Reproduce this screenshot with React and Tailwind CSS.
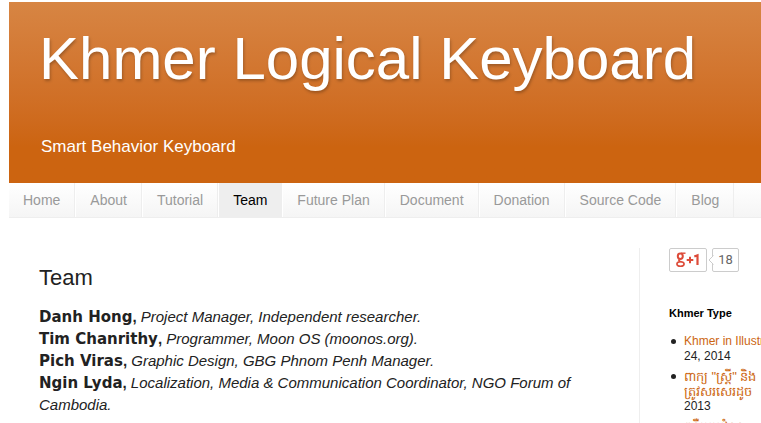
import React from 'react';

const tabs = ['Home', 'About', 'Tutorial', 'Team', 'Future Plan', 'Document', 'Donation', 'Source Code', 'Blog'];

const members = [
  { name: 'Danh Hong', role: 'Project Manager, Independent researcher.' },
  { name: 'Tim Chanrithy', role: 'Programmer, Moon OS (moonos.org).' },
  { name: 'Pich Viras', role: 'Graphic Design, GBG Phnom Penh Manager.' },
  { name: 'Ngin Lyda', role: 'Localization, Media & Communication Coordinator, NGO Forum of Cambodia.' },
];

const posts = [
  { lang: 'en', lines: ['Khmer in Illustrator'], date: '24, 2014' },
  { lang: 'km', lines: ['ពាក្យ "ស្ត្រី" និង', 'ត្រូវសរសេរដូច'], date: '2013' },
  { lang: 'km', lines: ['ពន្លឺរបបជំនួន'], date: '' },
];

function Header() {
  return (
    <header className="h-[181px] bg-linear-to-b from-[#d78543] to-[#cc6410] to-80% px-[30px] pt-[22px] text-white">
      <h1 className="whitespace-nowrap text-[60px] leading-[70px] [text-shadow:1px_2px_3px_rgba(0,0,0,0.25)]">
        Khmer Logical Keyboard
      </h1>
      <p className="mt-[43px] px-[2px] text-[17px] leading-5">Smart Behavior Keyboard</p>
    </header>
  );
}

function TabBar() {
  return (
    <nav className="border-b border-[#eeeeee] bg-linear-to-b from-white to-[#f5f5f5]">
      <ul className="flex">
        {tabs.map((tab) => (
          <li key={tab} className="border-r border-l border-r-[#eeeeee] border-l-white first:border-l-0">
            <a
              href="#"
              className={
                tab === 'Team'
                  ? 'block whitespace-nowrap bg-[#eeeeee] px-[14px] text-sm leading-[34px] text-black'
                  : 'block whitespace-nowrap px-[14px] text-sm leading-[34px] text-[#999999]'
              }
            >
              {tab}
            </a>
          </li>
        ))}
      </ul>
    </nav>
  );
}

function PlusOne() {
  return (
    <div className="flex items-center gap-[5px]">
      <button
        aria-label="+1"
        className="flex h-6 w-[38px] items-center justify-center rounded-[2px] border border-[#cccccc] bg-white"
      >
        <svg width="26" height="16" viewBox="0 0 26 16" fill="none" stroke="#dd4b39">
          <ellipse cx="5.300" cy="4.300" rx="2.500" ry="2.700" strokeWidth="2" />
          <path d="M6 1.200H10.500" strokeWidth="1.400" />
          <path d="M4.500 7.300C3 8.600 4.500 9.300 6.500 9.800" strokeWidth="1.600" />
          <ellipse cx="5.500" cy="12" rx="3.600" ry="2.300" strokeWidth="1.600" />
          <path d="M11.700 8h6.600M15 4.700v6.600" strokeWidth="2" />
          <path d="M19.300 4.500L22.500 3.300V13" strokeWidth="2.200" />
        </svg>
      </button>
      <div className="relative flex h-6 w-[27px] items-center justify-center rounded-[2px] border border-[#cccccc] bg-white font-[Roboto,sans-serif] text-[13px] text-[#666666]">
        <svg className="absolute top-[6px] -left-[5px]" width="6" height="10" viewBox="0 0 6 10">
          <path d="M5.500 0.500L1 5l4.500 4.500" fill="white" stroke="#cccccc" />
        </svg>
        18
      </div>
    </div>
  );
}

function Sidebar() {
  return (
    <aside className="w-[122px] shrink-0 overflow-hidden border-l border-[#eeeeee] pl-[29px]">
      <PlusOne />
      <h2 className="mt-[34px] text-[11px] leading-[14px] font-bold text-black">Khmer Type</h2>
      <ul className="mt-[14px] text-xs leading-[15px]">
        {posts.map((post) => (
          <li key={post.lines[0]} className="flex gap-2 whitespace-nowrap pb-[5px]">
            <span className="mt-[5px] ml-[2px] size-[5px] shrink-0 rounded-full bg-[#222222]" />
            <div>
              <a
                href="#"
                lang={post.lang}
                className={
                  post.lang === 'km'
                    ? 'block text-[13px] leading-[15px] font-medium text-[#cc6611]'
                    : 'block text-[#cc6611]'
                }
              >
                {post.lines.map((line) => (
                  <span key={line} className="block">{line}</span>
                ))}
              </a>
              {post.date}
            </div>
          </li>
        ))}
      </ul>
    </aside>
  );
}

function App() {
  return (
    <div className="h-screen overflow-hidden bg-white pt-[2px] pl-[9px] font-['Liberation_Sans',Arial,sans-serif] text-[#222222]">
      <Header />
      <TabBar />
      <div className="mt-[30px] flex">
        <main className="min-w-0 flex-1 pr-[30px] pb-10 pl-[30px]">
          <h3 className="mt-4 text-[22px] leading-[28px]">Team</h3>
          <div className="mt-[14px] text-[15px] leading-[22px]">
            {members.map((member) => (
              <p key={member.name}>
                <span className="font-['Arial_Black','DejaVu_Sans',sans-serif] leading-none font-bold">
                  {member.name}
                </span>
                <b>,</b> <i>{member.role}</i>
              </p>
            ))}
          </div>
        </main>
        <Sidebar />
      </div>
    </div>
  );
}

export default App;
